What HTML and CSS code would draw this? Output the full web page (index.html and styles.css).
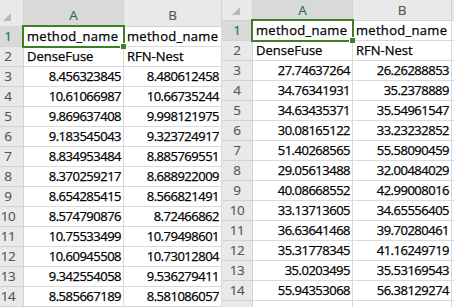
FILE: index.html
```html
<!DOCTYPE html>
<html lang="en">
<head>
<meta charset="utf-8">
<title>Sheets</title>
<link rel="stylesheet" href="styles.css">
</head>
<body>
<div class="page">
  <section class="sheet sheet-left">
    <div class="grid">
      <div class="hd corner"><span class="tri"></span></div>
      <div class="hd colhead sel">A</div>
      <div class="hd colhead">B</div>

      <div class="hd rowhead sel">1</div><div class="c name">method_name</div><div class="c name">method_name</div>
      <div class="hd rowhead">2</div><div class="c">DenseFuse</div><div class="c">RFN-Nest</div>
      <div class="hd rowhead">3</div><div class="c num">8.456323845</div><div class="c num">8.480612458</div>
      <div class="hd rowhead">4</div><div class="c num">10.61066987</div><div class="c num">10.66735244</div>
      <div class="hd rowhead">5</div><div class="c num">9.869637408</div><div class="c num">9.998121975</div>
      <div class="hd rowhead">6</div><div class="c num">9.183545043</div><div class="c num">9.323724917</div>
      <div class="hd rowhead">7</div><div class="c num">8.834953484</div><div class="c num">8.885769551</div>
      <div class="hd rowhead">8</div><div class="c num">8.370259217</div><div class="c num">8.688922009</div>
      <div class="hd rowhead">9</div><div class="c num">8.654285415</div><div class="c num">8.566821491</div>
      <div class="hd rowhead">10</div><div class="c num">8.574790876</div><div class="c num">8.72466862</div>
      <div class="hd rowhead">11</div><div class="c num">10.75533499</div><div class="c num">10.79498601</div>
      <div class="hd rowhead">12</div><div class="c num">10.60945508</div><div class="c num">10.73012804</div>
      <div class="hd rowhead">13</div><div class="c num">9.342554058</div><div class="c num">9.536279411</div>
      <div class="hd rowhead">14</div><div class="c num">8.585667189</div><div class="c num">8.581086057</div>
    </div>
    <div class="selection"><span class="handle"></span></div>
  </section>

  <section class="sheet sheet-right">
    <div class="grid">
      <div class="hd corner"><span class="tri"></span></div>
      <div class="hd colhead sel">A</div>
      <div class="hd colhead">B</div>
      <div class="hd colhead"></div>

      <div class="hd rowhead sel">1</div><div class="c name">method_name</div><div class="c name">method_name</div><div class="c"></div>
      <div class="hd rowhead">2</div><div class="c">DenseFuse</div><div class="c">RFN-Nest</div><div class="c"></div>
      <div class="hd rowhead">3</div><div class="c num">27.74637264</div><div class="c num">26.26288853</div><div class="c"></div>
      <div class="hd rowhead">4</div><div class="c num">34.76341931</div><div class="c num">35.2378889</div><div class="c"></div>
      <div class="hd rowhead">5</div><div class="c num">34.63435371</div><div class="c num">35.54961547</div><div class="c"></div>
      <div class="hd rowhead">6</div><div class="c num">30.08165122</div><div class="c num">33.23232852</div><div class="c"></div>
      <div class="hd rowhead">7</div><div class="c num">51.40268565</div><div class="c num">55.58090459</div><div class="c"></div>
      <div class="hd rowhead">8</div><div class="c num">29.05613488</div><div class="c num">32.00484029</div><div class="c"></div>
      <div class="hd rowhead">9</div><div class="c num">40.08668552</div><div class="c num">42.99008016</div><div class="c"></div>
      <div class="hd rowhead">10</div><div class="c num">33.13713605</div><div class="c num">34.65556405</div><div class="c"></div>
      <div class="hd rowhead">11</div><div class="c num">36.63641468</div><div class="c num">39.70280461</div><div class="c"></div>
      <div class="hd rowhead">12</div><div class="c num">35.31778345</div><div class="c num">41.16249719</div><div class="c"></div>
      <div class="hd rowhead">13</div><div class="c num">35.0203495</div><div class="c num">35.53169543</div><div class="c"></div>
      <div class="hd rowhead">14</div><div class="c num">55.94353068</div><div class="c num">56.38129274</div><div class="c"></div>
      <div class="hd rowhead"></div><div class="c"></div><div class="c"></div><div class="c"></div>
    </div>
    <div class="selection"><span class="handle"></span></div>
  </section>
</div>
</body>
</html>
```

FILE: styles.css
```css
html, body {
  margin: 0;
  padding: 0;
  background: #ffffff;
}

body {
  width: 454px;
  height: 307px;
  overflow: hidden;
  font-family: "Open Sans", "Noto Sans", sans-serif;
}

.page {
  display: flex;
  height: 307px;
}

.sheet {
  position: relative;
  overflow: hidden;
  height: 307px;
}

.sheet-left {
  flex: none;
  width: 222px;
}

.sheet-right {
  flex: 1;
}

.grid {
  display: grid;
}

.sheet-left .grid {
  margin-left: -7px;
  grid-template-columns: 31px 100px 98px;
  grid-template-rows: 27px;
  grid-auto-rows: 20px;
}

.sheet-right .grid {
  grid-template-columns: 31px 100px 99px 1fr;
  grid-template-rows: 21px;
  grid-auto-rows: 20px;
}

.c {
  box-sizing: border-box;
  border-right: 1px solid #dadada;
  border-bottom: 1px solid #dadada;
  padding: 0 2px 0 3px;
  font-size: 13px;
  line-height: 19px;
  color: #000000;
  white-space: nowrap;
  overflow: hidden;
  -webkit-text-stroke: 0.25px #000000;
}

.num {
  text-align: right;
  letter-spacing: -0.5px;
}

.name {
  letter-spacing: 0.3px;
}

.hd {
  box-sizing: border-box;
  background: #e9e9e9;
  color: #555555;
  border-right: 1px solid #d2d2d2;
  border-bottom: 1px solid #d2d2d2;
  font-size: 13.5px;
  line-height: 20px;
  text-align: center;
  white-space: nowrap;
  overflow: hidden;
  -webkit-text-stroke: 0.15px #555555;
}

.hd.sel {
  background: #d9d9d9;
  color: #217346;
  -webkit-text-stroke: 0.15px #217346;
}

.rowhead {
  line-height: 19px;
  letter-spacing: -0.4px;
}

.sheet-left .colhead {
  padding-top: 5px;
}

.corner {
  display: flex;
  justify-content: flex-end;
  align-items: flex-end;
  padding: 0 12px 5px 0;
}

.tri {
  width: 0;
  height: 0;
  border-left: 8px solid transparent;
  border-bottom: 8px solid #b9b9b9;
}

.selection {
  position: absolute;
  box-sizing: border-box;
  width: 103px;
  height: 23px;
  border: 2px solid #3b8026;
}

.sheet-left .selection {
  left: 22px;
  top: 25px;
}

.sheet-right .selection {
  left: 29px;
  top: 19px;
}

.handle {
  position: absolute;
  right: -3px;
  bottom: -3px;
  width: 6px;
  height: 6px;
  box-sizing: border-box;
  background: #3b8026;
  border-top: 1px solid #ffffff;
  border-left: 1px solid #ffffff;
}
```
